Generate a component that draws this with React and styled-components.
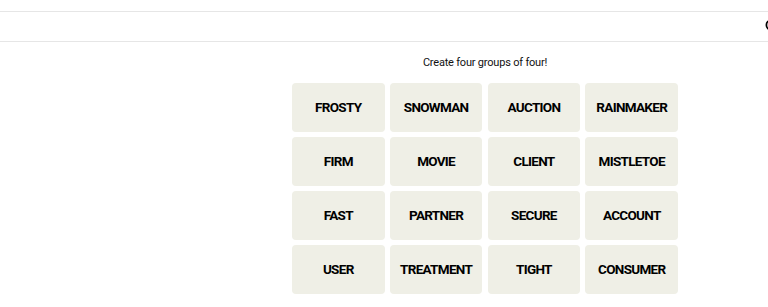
import React from "react";
import styled, { createGlobalStyle } from "styled-components";

const GlobalStyle = createGlobalStyle`
  html, body {
    margin: 0;
    padding: 0;
    background: #fff;
    overflow: hidden;
  }
  body {
    font-family: Roboto, "Liberation Sans", Arial, sans-serif;
    color: #000;
  }
`;

const Page = styled.div`
  width: 970px;
  min-width: 970px;
`;

const TopSpace = styled.div`
  height: 11px;
  border-bottom: 1px solid #e6e6e6;
`;

const Toolbar = styled.header`
  height: 29px;
  display: flex;
  align-items: center;
  justify-content: flex-end;
  padding-right: 127px;
  border-bottom: 1px solid #e6e6e6;
`;

const IconGroup = styled.div`
  display: flex;
  align-items: center;
  gap: 16px;
  margin-bottom: 4px;
`;

const IconButton = styled.button`
  border: none;
  background: none;
  padding: 0;
  width: 16px;
  height: 16px;
  display: flex;
  align-items: center;
  justify-content: center;
  color: #000;
`;

const Main = styled.main`
  display: flex;
  flex-direction: column;
  align-items: center;
  padding-top: 14px;
`;

const Prompt = styled.p`
  margin: 0 0 13px;
  font-size: 11px;
  line-height: 14px;
  letter-spacing: -0.2px;
  color: #121212;
`;

const Board = styled.div`
  display: grid;
  grid-template-columns: repeat(4, 92.5px);
  grid-auto-rows: 48.5px;
  column-gap: 5.33px;
  row-gap: 5.5px;
`;

const Tile = styled.button`
  border: none;
  border-radius: 4px;
  background: #efefe6;
  display: flex;
  align-items: center;
  justify-content: center;
  padding: 0;
  font-family: Roboto, "Liberation Sans", Arial, sans-serif;
  font-weight: 700;
  font-size: 13.5px;
  letter-spacing: -0.7px;
  color: #000;
  text-transform: uppercase;
`;

const words = [
  "Frosty", "Snowman", "Auction", "Rainmaker",
  "Firm", "Movie", "Client", "Mistletoe",
  "Fast", "Partner", "Secure", "Account",
  "User", "Treatment", "Tight", "Consumer",
];

const HelpIcon = () => (
  <svg width="12" height="12" viewBox="0 0 12 12" fill="none">
    <circle cx="6" cy="6" r="4.6" stroke="#000" strokeWidth="1.8" />
  </svg>
);

const App = () => {
  return (
    <>
      <GlobalStyle />
      <Page>
        <TopSpace />
        <Toolbar>
          <IconGroup>
            <IconButton aria-label="help">
              <HelpIcon />
            </IconButton>
            <IconButton aria-label="stats">
              <HelpIcon />
            </IconButton>
            <IconButton aria-label="settings">
              <HelpIcon />
            </IconButton>
          </IconGroup>
        </Toolbar>
        <Main>
          <Prompt>Create four groups of four!</Prompt>
          <Board>
            {words.map((w) => (
              <Tile key={w}>{w}</Tile>
            ))}
          </Board>
        </Main>
      </Page>
    </>
  );
};

export default App;
